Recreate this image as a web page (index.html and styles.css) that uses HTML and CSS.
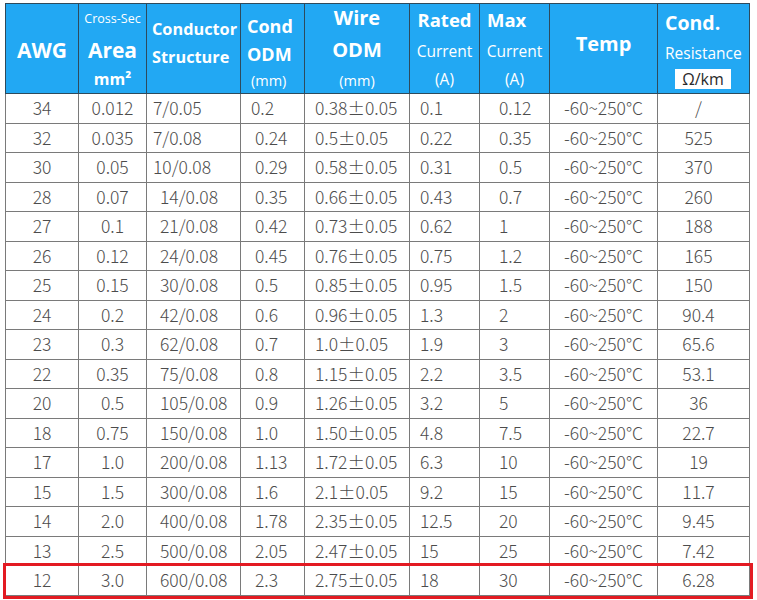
FILE: index.html
```html
<!DOCTYPE html>
<html>
<head>
<meta charset="utf-8">
<link rel="stylesheet" href="styles.css">
</head>
<body>
<div class="sheet">
<table class="spec">
<colgroup>
<col class="c1"><col class="c2"><col class="c3"><col class="c4"><col class="c5"><col class="c6"><col class="c7"><col class="c8"><col class="c9">
</colgroup>
<thead>
<tr>
<th class="h-awg"><div class="big">AWG</div></th>
<th class="h-area"><div class="l-cross">Cross-Sec</div><div class="l-area">Area</div><div class="l-mm2">mm²</div></th>
<th class="h-struct"><div class="l-cs">Conductor</div><div class="l-cs">Structure</div></th>
<th class="h-cond"><div class="l-cond">Cond</div><div class="l-odm">ODM</div><div class="l-mm">(mm)</div></th>
<th class="h-wire"><div class="l-wire">Wire</div><div class="l-wodm">ODM</div><div class="l-wmm">(mm)</div></th>
<th class="h-rated"><div class="l-rated">Rated</div><div class="l-cur">Current</div><div class="l-a">(A)</div></th>
<th class="h-max"><div class="l-max">Max</div><div class="l-cur">Current</div><div class="l-a">(A)</div></th>
<th class="h-temp"><div class="l-temp">Temp</div></th>
<th class="h-res"><div class="l-cd">Cond.</div><div class="l-res">Resistance</div><div class="l-ohm"><span class="ohm">Ω/km</span></div></th>
</tr>
</thead>
<tbody>
<tr><td>34</td><td>0.012</td><td class="st st-a">7/0.05</td><td class="od od-a">0.2</td><td class="wo">0.38±0.05</td><td class="ra">0.1</td><td class="mx">0.12</td><td class="tp">-60~250°C</td><td class="rs">/</td></tr>
<tr><td>32</td><td>0.035</td><td class="st st-a">7/0.08</td><td class="od">0.24</td><td class="wo">0.5±0.05</td><td class="ra">0.22</td><td class="mx">0.35</td><td class="tp">-60~250°C</td><td class="rs">525</td></tr>
<tr><td>30</td><td>0.05</td><td class="st st-a">10/0.08</td><td class="od">0.29</td><td class="wo">0.58±0.05</td><td class="ra">0.31</td><td class="mx">0.5</td><td class="tp">-60~250°C</td><td class="rs">370</td></tr>
<tr><td>28</td><td>0.07</td><td class="st">14/0.08</td><td class="od">0.35</td><td class="wo">0.66±0.05</td><td class="ra">0.43</td><td class="mx">0.7</td><td class="tp">-60~250°C</td><td class="rs">260</td></tr>
<tr><td>27</td><td>0.1</td><td class="st">21/0.08</td><td class="od">0.42</td><td class="wo">0.73±0.05</td><td class="ra">0.62</td><td class="mx">1</td><td class="tp">-60~250°C</td><td class="rs">188</td></tr>
<tr><td>26</td><td>0.12</td><td class="st">24/0.08</td><td class="od">0.45</td><td class="wo">0.76±0.05</td><td class="ra">0.75</td><td class="mx">1.2</td><td class="tp">-60~250°C</td><td class="rs">165</td></tr>
<tr><td>25</td><td>0.15</td><td class="st">30/0.08</td><td class="od">0.5</td><td class="wo">0.85±0.05</td><td class="ra">0.95</td><td class="mx">1.5</td><td class="tp">-60~250°C</td><td class="rs">150</td></tr>
<tr><td>24</td><td>0.2</td><td class="st">42/0.08</td><td class="od">0.6</td><td class="wo">0.96±0.05</td><td class="ra">1.3</td><td class="mx">2</td><td class="tp">-60~250°C</td><td class="rs">90.4</td></tr>
<tr><td>23</td><td>0.3</td><td class="st">62/0.08</td><td class="od">0.7</td><td class="wo">1.0±0.05</td><td class="ra">1.9</td><td class="mx">3</td><td class="tp">-60~250°C</td><td class="rs">65.6</td></tr>
<tr><td>22</td><td>0.35</td><td class="st">75/0.08</td><td class="od">0.8</td><td class="wo">1.15±0.05</td><td class="ra">2.2</td><td class="mx">3.5</td><td class="tp">-60~250°C</td><td class="rs">53.1</td></tr>
<tr><td>20</td><td>0.5</td><td class="st">105/0.08</td><td class="od">0.9</td><td class="wo">1.26±0.05</td><td class="ra">3.2</td><td class="mx">5</td><td class="tp">-60~250°C</td><td class="rs">36</td></tr>
<tr><td>18</td><td>0.75</td><td class="st">150/0.08</td><td class="od">1.0</td><td class="wo">1.50±0.05</td><td class="ra">4.8</td><td class="mx">7.5</td><td class="tp">-60~250°C</td><td class="rs">22.7</td></tr>
<tr><td>17</td><td>1.0</td><td class="st">200/0.08</td><td class="od">1.13</td><td class="wo">1.72±0.05</td><td class="ra">6.3</td><td class="mx">10</td><td class="tp">-60~250°C</td><td class="rs">19</td></tr>
<tr><td>15</td><td>1.5</td><td class="st">300/0.08</td><td class="od">1.6</td><td class="wo">2.1±0.05</td><td class="ra">9.2</td><td class="mx">15</td><td class="tp">-60~250°C</td><td class="rs">11.7</td></tr>
<tr><td>14</td><td>2.0</td><td class="st">400/0.08</td><td class="od">1.78</td><td class="wo">2.35±0.05</td><td class="ra">12.5</td><td class="mx">20</td><td class="tp">-60~250°C</td><td class="rs">9.45</td></tr>
<tr><td>13</td><td>2.5</td><td class="st">500/0.08</td><td class="od">2.05</td><td class="wo">2.47±0.05</td><td class="ra">15</td><td class="mx">25</td><td class="tp">-60~250°C</td><td class="rs">7.42</td></tr>
<tr><td>12</td><td>3.0</td><td class="st">600/0.08</td><td class="od">2.3</td><td class="wo">2.75±0.05</td><td class="ra">18</td><td class="mx">30</td><td class="tp">-60~250°C</td><td class="rs">6.28</td></tr>
</tbody>
</table>
<div class="highlight"></div>
</div>
</body>
</html>
```
FILE: styles.css
```css
html, body { margin: 0; padding: 0; background: #fff; }
.sheet { position: relative; padding: 3px 0 0 5px; width: 752px; height: 597px; }
.spec {
  border-collapse: collapse;
  table-layout: fixed;
  width: 745px;
  font-family: "Noto Sans CJK SC", "Noto Sans", sans-serif;
  color: #4c4c4c;
}
.c1 { width: 73px; } .c2 { width: 68px; } .c3 { width: 94px; }
.c4 { width: 64px; } .c5 { width: 105px; } .c6 { width: 70px; }
.c7 { width: 70px; } .c8 { width: 108px; } .c9 { width: 92px; }

.spec th {
  background: #22a8f3;
  color: #fff;
  height: 89px;
  padding: 0;
  border: 1px solid #2d4a5c;
  font-family: "Open Sans", "Noto Sans", sans-serif;
  font-weight: 700;
  vertical-align: top;
  text-align: center;
  white-space: nowrap;
}
.spec td {
  height: 28.5px;
  padding: 0;
  border: 1px solid #7a7a7a;
  font-size: 17.5px;
  font-weight: 300;
  line-height: 20px;
  text-align: center;
  vertical-align: middle;
  white-space: nowrap;
}
.spec tbody tr:first-child td { border-top-color: #2d4a5c; }

.big { font-size: 21px; line-height: 24px; padding-top: 34px; }

.l-cross { font-size: 12.5px; font-weight: 400; line-height: 30px; }
.l-area { font-size: 21px; line-height: 32px; }
.l-mm2 { font-size: 16px; line-height: 27px; }

.h-struct { text-align: left !important; }
.l-cs { font-size: 16.3px; line-height: 28px; padding-left: 5px; }
.h-struct .l-cs:first-child { padding-top: 11px; }

.h-cond { text-align: left !important; }
.l-cond { font-size: 18px; line-height: 28px; padding: 8px 0 0 6px; }
.l-odm { font-size: 18px; line-height: 28px; padding-left: 6px; }
.l-mm { font-size: 14.5px; font-weight: 400; line-height: 25px; padding-left: 10px; }

.l-wire { font-size: 20px; line-height: 27px; }
.l-wodm { font-size: 20px; line-height: 38px; }
.l-wmm { font-size: 14.5px; font-weight: 400; line-height: 24px; }

.l-rated { font-size: 18.5px; line-height: 30px; padding-top: 1px; }
.l-max { font-size: 18.5px; line-height: 30px; padding: 1px 0 0 7px; text-align: left; }
.l-cur { font-size: 15.5px; font-weight: 400; line-height: 32px; }
.l-a { font-size: 15.5px; font-weight: 400; line-height: 24px; }

.l-temp { font-size: 20px; line-height: 24px; padding-top: 28px; }

.h-res { text-align: left !important; }
.l-cd { font-size: 19.5px; line-height: 30px; padding: 4px 0 0 7px; }
.l-res { font-size: 15.5px; font-weight: 400; line-height: 30px; padding-left: 7px; }
.l-ohm { padding: 1px 0 0 17px; line-height: 20px; }
.ohm {
  display: inline-block;
  background: #fff;
  color: #2a2a2a;
  font-size: 16px;
  font-weight: 400;
  line-height: 20px;
  width: 56px;
  text-align: center;
}

.st { text-align: left !important; padding-left: 13px !important; }
.st-a { padding-left: 6px !important; }
.od { text-align: left !important; padding-left: 14px !important; }
.od-a { padding-left: 10px !important; }
.wo { text-align: left !important; padding-left: 10px !important; }
.ra { text-align: left !important; padding-left: 10px !important; }
.mx { text-align: left !important; padding-left: 19px !important; }
.tp { text-align: center; }
.rs { padding-right: 10px !important; }

.highlight {
  position: absolute;
  left: 3px;
  top: 563px;
  width: 744px;
  height: 30px;
  border: 3px solid #e31a22;
}
```
